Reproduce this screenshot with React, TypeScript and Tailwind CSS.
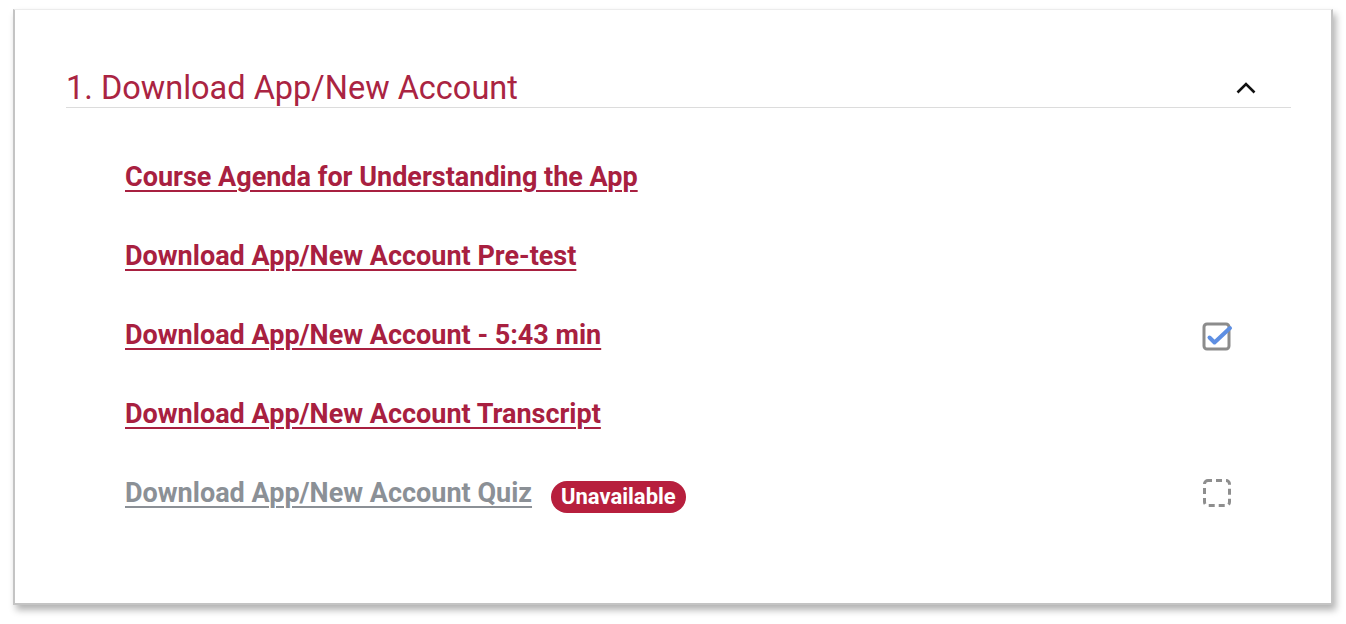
import React from "react";

interface Lesson {
  title: string;
  available: boolean;
  status?: "done" | "todo";
}

const lessons: Lesson[] = [
  { title: "Course Agenda for Understanding the App", available: true },
  { title: "Download App/New Account Pre-test", available: true },
  { title: "Download App/New Account - 5:43 min", available: true, status: "done" },
  { title: "Download App/New Account Transcript", available: true },
  { title: "Download App/New Account Quiz", available: false, status: "todo" },
];

const CheckedBox = () => (
  <svg width="32" height="32" viewBox="0 0 32 32" fill="none" className="mt-[3px]">
    <rect x="3" y="4" width="25" height="25" rx="3" stroke="#8c8c8c" strokeWidth="3" />
    <path
      d="M8.5 17.5 L13.5 22.5 L29 8"
      stroke="#5e8fe3"
      strokeWidth="4"
      strokeLinecap="round"
      strokeLinejoin="round"
    />
  </svg>
);

const EmptyBox = () => (
  <svg width="32" height="32" viewBox="0 0 32 32" fill="none" className="ml-[2px] mt-[1px]">
    <rect
      x="3.5"
      y="3.5"
      width="25"
      height="25"
      rx="3.5"
      stroke="#8e8e8e"
      strokeWidth="3"
      strokeDasharray="6 4"
      strokeDashoffset="2"
    />
  </svg>
);

export default function App() {
  return (
    <div className="min-h-screen bg-white pl-[13px] pt-[9px]" style={{ fontFamily: "Roboto, 'Noto Sans', sans-serif" }}>
      <div className="w-[1320px] h-[596px] bg-white border-l-2 border-b-2 border-r-2 border-[#c4c4c4] border-t border-t-[#ececec] shadow-[3px_5px_7px_rgba(0,0,0,0.3)] pt-[58px] pl-[51px] pr-[40px]">
        {/* section header */}
        <div className="flex items-center justify-between border-b border-[#dcdcdc] h-[40px]">
          <h2 className="text-[32.5px] leading-[36px] font-normal text-[#aa2442]">
            1. Download App/New Account
          </h2>
          <svg width="22" height="14" viewBox="0 0 22 14" className="mr-[34px] mt-[1px]" fill="none">
            <path d="M2.5 11.5 L11 3 L19.5 11.5" stroke="#111" strokeWidth="2.6" />
          </svg>
        </div>

        {/* lessons */}
        <div className="pt-[29px] pl-[59px] pr-[58px]">
          {lessons.map((l) => (
            <div key={l.title} className="h-[79px] flex items-center justify-between">
              <div className="flex items-center">
                <a
                  href="#"
                  className={`text-[27px] leading-[32px] font-bold underline decoration-2 underline-offset-[4px] ${
                    l.available ? "text-[#a82040]" : "text-[#8b9096]"
                  }`}
                >
                  {l.title}
                </a>
                {!l.available && (
                  <span className="ml-[19px] mt-[8px] h-[32px] px-[10px] rounded-full bg-[#b71f3d] text-white text-[22px] font-bold leading-[32px]">
                    Unavailable
                  </span>
                )}
              </div>
              {l.status === "done" && <CheckedBox />}
              {l.status === "todo" && <EmptyBox />}
            </div>
          ))}
        </div>
      </div>
    </div>
  );
}
